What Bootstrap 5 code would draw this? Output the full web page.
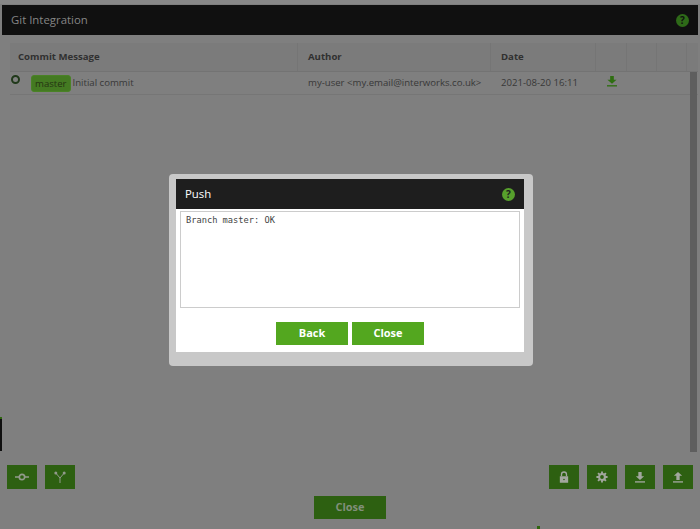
<!DOCTYPE html>
<html lang="en"><head><meta charset="utf-8"><title>Git Integration</title>
<link href="https://cdn.jsdelivr.net/npm/bootstrap@5.3.0/dist/css/bootstrap.min.css" rel="stylesheet">
<style>
html,body{height:529px;overflow:hidden}
body{background:#7f7f7f;font-family:"Open Sans","Noto Sans",sans-serif;position:relative;color:#2c2c2c;font-size:9.6px}
.shell{height:529px;padding:1px 2px 0;border-top:4px solid #888}
.top-bar{height:30px;background:#101010;color:#858585;font-size:11.4px;padding:0 9px}
.help{width:13px;height:13px;border-radius:50%;display:flex;align-items:center;justify-content:center;font-weight:700;font-size:10px;line-height:1}
.help-dim{background:#2e6a18;color:#101010}
.body-wrap{height:430px;padding:8px 0 0 8px}
.git-head,.git-row{display:grid;grid-template-columns:288px 193px 105px 31px 30px 30px 7px}
.git-head{height:29px;background:#7b7b7b;border-bottom:1px solid #737373;font-weight:700;color:#303030}
.git-head>div{border-right:1px solid #757575;padding:0 0 0 8px;display:flex;align-items:center}
.git-head>div:nth-child(2),.git-head>div:nth-child(3){padding-left:10px}
.git-row{height:23px;border-bottom:1px solid #767676;align-items:center;color:#383838}
.git-row>div{padding:0 0 0 10px;white-space:nowrap}
.msg-cell{padding:0!important;display:flex;align-items:center}
.dot{width:9px;height:9px;border:2px solid #20391a;border-radius:50%;margin:-7px 0 0 1px;background:#7f7f7f;flex:none}
.branch-tag{background:#447a22;border:1px solid #4a8226;border-radius:3px;color:#243412;padding:0 3px;height:17px;line-height:15px;margin:1px 2px 0 11px}
.scroll-area{position:relative}
.vbar{position:absolute;top:37px;right:1px;width:7px;height:380px;background:#5e5e5e}
.foot-tools{height:28px;padding:0 5px}
.tool{width:30px;height:24px;background:#2d6011;border:0;border-radius:0;padding:0;display:flex;align-items:center;justify-content:center}
.foot-close{padding-top:3px}
.btn-dim{width:72px;height:23px;background:#2d6011;color:#828f7a;font-weight:700;font-size:11px;border:0;border-radius:0;padding:0}
.backdrop-modal{position:absolute;left:169px;top:174px;width:364px;height:192px;background:#c8c8c8;border-radius:4px;padding:5px 9px 14px 7px}
.push-inner{height:173px;background:#fff;display:flex;flex-direction:column}
.push-head{height:30px;background:#1e1e1e;color:#fff;font-size:11.4px;padding:0 9px}
.help-bright{background:#57a02c;color:#1e1e1e}
.log{height:97px;margin:2px 0 0 4px;width:340px;border:1px solid #ccc;font-family:"DejaVu Sans Mono","Liberation Mono",monospace;font-size:8.7px;color:#444;padding:2px 5px;line-height:12px}
.push-btns{padding-top:14px}
.btn-go{width:72px;height:23px;background:#53a71f;color:#fff;font-weight:700;font-size:11px;border:0;border-radius:0;padding:0}
.edge-mark{position:absolute;left:0;top:417px;width:2px;height:34px;background:#0f0f0f;border-top:2px solid #2f650f}
.crumb{position:absolute;left:537px;top:526px;width:3px;height:3px;background:#2f650f}
</style></head><body>
<div class="shell d-flex flex-column">
  <div class="top-bar d-flex align-items-center justify-content-between"><span>Git Integration</span><span class="help help-dim">?</span></div>
  <div class="body-wrap scroll-area">
    <div class="git-head"><div>Commit Message</div><div>Author</div><div>Date</div><div></div><div></div><div></div><div class="border-0"></div></div>
    <div class="git-row">
      <div class="msg-cell"><span class="dot"></span><span class="branch-tag">master</span><span>Initial commit</span></div>
      <div>my-user &lt;my.email@interworks.co.uk&gt;</div>
      <div>2021-08-20 16:11</div>
      <div><svg width="10" height="11" viewBox="0 0 11 12" style="margin:-4px 0 0 1px;display:block"><path d="M3.500 0h4v4H10.500L5.500 8.500.5 4h3z" fill="#2f6e12"/><rect x="0" y="10" width="11" height="1.500" fill="#2f6e12"/></svg></div>
      <div></div><div></div><div></div>
    </div>
    <div class="vbar"></div>
  </div>
  <div class="foot-tools d-flex justify-content-between">
    <div class="d-flex gap-2">
      <button class="tool" aria-label="Commit"><svg width="14" height="8" viewBox="0 0 14 8"><circle cx="7" cy="4" r="2.700" fill="none" stroke="#929a8c" stroke-width="1.700"/><path d="M0 4h4M10 4h4" stroke="#929a8c" stroke-width="1.500"/></svg></button>
      <button class="tool" aria-label="Branch"><svg width="12" height="12" viewBox="0 0 12 12"><path d="M6 12V7M6 7 2.200 2.500M6 7l3.800-4.500" fill="none" stroke="#929a8c" stroke-width="1"/><circle cx="1.800" cy="2" r="1.500" fill="#929a8c"/><circle cx="10.200" cy="2" r="1.500" fill="#929a8c"/></svg></button>
    </div>
    <div class="d-flex gap-2">
      <button class="tool" aria-label="Lock"><svg width="10" height="12" viewBox="0 0 12 14"><path d="M3 6V4a3 3 0 0 1 6 0v2" fill="none" stroke="#a3a79f" stroke-width="1.600"/><path fill-rule="evenodd" d="M1 6h10v8H1zM6 9a1 1 0 1 0 0 2 1 1 0 0 0 0-2z" fill="#a3a79f"/></svg></button>
      <button class="tool" aria-label="Settings"><svg width="12" height="12" viewBox="0 0 14 14"><circle cx="7" cy="7" r="3.400" fill="none" stroke="#a3a79f" stroke-width="2.400"/><path d="M7 .5v3M7 10.500v3M.5 7h3M10.500 7h3M2.400 2.400l2.100 2.100M9.500 9.500l2.100 2.100M2.400 11.600l2.100-2.100M9.500 4.500l2.100-2.100" stroke="#a3a79f" stroke-width="2.200"/></svg></button>
      <button class="tool" aria-label="Pull"><svg width="10" height="11" viewBox="0 0 12 13"><path d="M4 0h4v5h3L6 9.500 1 5h3z" fill="#a3a79f"/><rect y="11" width="12" height="1.600" fill="#a3a79f"/></svg></button>
      <button class="tool" aria-label="Push"><svg width="10" height="11" viewBox="0 0 12 13"><path d="M4 9.500h4v-5h3L6 0 1 4.500h3z" fill="#a3a79f"/><rect y="11" width="12" height="1.600" fill="#a3a79f"/></svg></button>
    </div>
  </div>
  <div class="foot-close d-flex justify-content-center"><button class="btn btn-dim">Close</button></div>
</div>
<div class="edge-mark"></div><div class="crumb"></div>
<div class="backdrop-modal"><div class="push-inner">
  <div class="push-head d-flex align-items-center justify-content-between"><span>Push</span><span class="help help-bright">?</span></div>
  <div class="log">Branch master: OK</div>
  <div class="push-btns d-flex justify-content-center gap-1"><button class="btn btn-go">Back</button><button class="btn btn-go">Close</button></div>
</div></div>
</body></html>
